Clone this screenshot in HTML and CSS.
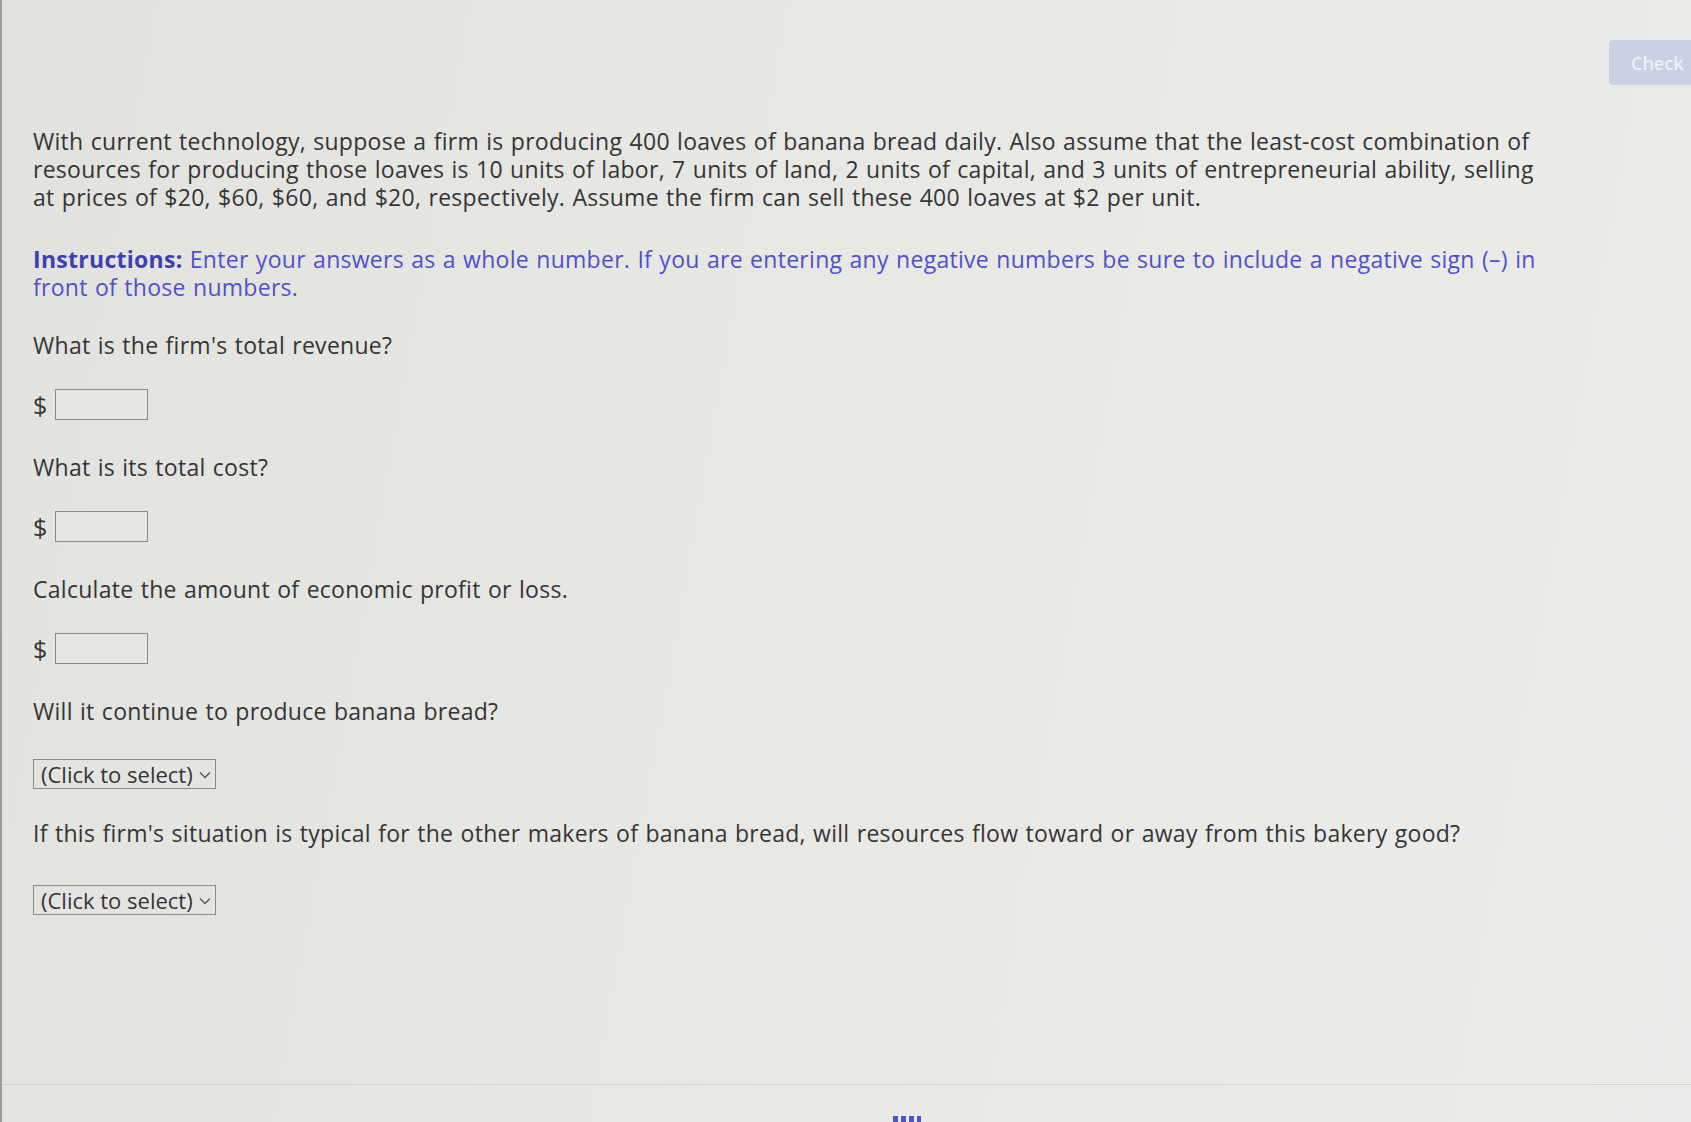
FILE: index.html
```html
<!DOCTYPE html>
<html>
<head>
<meta charset="utf-8">
<link rel="stylesheet" href="styles.css">
</head>
<body>
<div class="screen">
  <div class="topbar">
    <button class="check">Check</button>
  </div>
  <main class="question">
    <p class="stem">With current technology, suppose a firm is producing 400 loaves of banana bread daily. Also assume that the least-cost combination of resources for producing those loaves is 10 units of labor, 7 units of land, 2 units of capital, and 3 units of entrepreneurial ability, selling at prices of $20, $60, $60, and $20, respectively. Assume the firm can sell these 400 loaves at $2 per unit.</p>
    <p class="instructions"><b>Instructions:</b> Enter your answers as a whole number. If you are entering any negative numbers be sure to include a negative sign (–) in front of those numbers.</p>

    <p class="ask">What is the firm's total revenue?</p>
    <div class="answer"><span class="dollar">$</span><span class="box"></span></div>

    <p class="ask">What is its total cost?</p>
    <div class="answer"><span class="dollar">$</span><span class="box"></span></div>

    <p class="ask">Calculate the amount of economic profit or loss.</p>
    <div class="answer"><span class="dollar">$</span><span class="box"></span></div>

    <p class="ask">Will it continue to produce banana bread?</p>
    <div class="select">(Click to select)<svg class="chev" width="12" height="8" viewBox="0 0 12 8"><path d="M1 1.5 L6 6.5 L11 1.5" fill="none" stroke="#555" stroke-width="1.3"/></svg></div>

    <p class="ask">If this firm's situation is typical for the other makers of banana bread, will resources flow toward or away from this bakery good?</p>
    <div class="select last">(Click to select)<svg class="chev" width="12" height="8" viewBox="0 0 12 8"><path d="M1 1.5 L6 6.5 L11 1.5" fill="none" stroke="#555" stroke-width="1.3"/></svg></div>
  </main>
  <div class="bottom">
    <span class="dots"></span>
  </div>
</div>
</body>
</html>
```
FILE: styles.css
```css
* { box-sizing: border-box; }
html, body {
  margin: 0;
  padding: 0;
  width: 1691px;
  height: 1122px;
  overflow: hidden;
}
body {
  font-family: "Open Sans", "Liberation Sans", Arial, sans-serif;
  color: #353535;
  background: #e4e4e1;
}
.screen {
  position: relative;
  width: 1691px;
  height: 1122px;
  background: linear-gradient(100deg, #e2e2df 0%, #e8e8e5 50%, #ececea 100%);
  border-left: 2px solid #9c9c9a;
  display: flex;
  flex-direction: column;
}
.topbar {
  height: 40px;
  flex: none;
  display: flex;
  justify-content: flex-end;
  align-items: flex-start;
  padding-top: 40px;
}
.check {
  margin-right: -12px;
  width: 94px;
  height: 45px;
  border: none;
  border-radius: 4px;
  background: #c9d2e2;
  color: #eef1f6;
  font-family: "Open Sans", Arial, sans-serif;
  font-size: 18px;
  font-weight: 600;
  text-align: left;
  padding-left: 22px;
}
.question {
  flex: 1;
  padding: 87px 0 0 31px;
  width: 1538px;
  font-size: 23px;
  line-height: 28px;
  letter-spacing: 0.28px;
  word-spacing: 1px;
}
.question p { margin: 0; }
.instructions {
  margin-top: 34px !important;
  color: #5150cc;
}
.instructions b { color: #3d3fb3; font-weight: 700; }
.ask { margin-top: 33px !important; }
.instructions + .ask { margin-top: 30px !important; }
.answer {
  display: flex;
  align-items: center;
  margin-top: 30px;
  gap: 6px;
}
.dollar { font-size: 25px; color: #353535; width: 16px; }
.box {
  width: 93px;
  height: 31px;
  border: 1.5px solid #8a8a88;
  background: #e6e6e3;
}
.select {
  margin-top: 34px;
  display: inline-flex;
  align-items: center;
  gap: 6px;
  height: 30px;
  padding: 0 4px 0 7px;
  border: 1.5px solid #8a8a88;
  font-size: 22px;
  letter-spacing: 0;
  word-spacing: 0;
  color: #353535;
}
.select.last { margin-top: 38px; }
.select + .ask { margin-top: 30px !important; }
.chev { margin-top: 2px; }
.bottom {
  height: 38px;
  flex: none;
  border-top: 1px solid #d2d2cf;
  display: flex;
  justify-content: center;
  align-items: flex-end;
}
.dots {
  width: 28px;
  height: 6px;
  margin-left: 120px;
  background: repeating-linear-gradient(90deg, #4a56c8 0 5px, transparent 5px 8px);
}
```
